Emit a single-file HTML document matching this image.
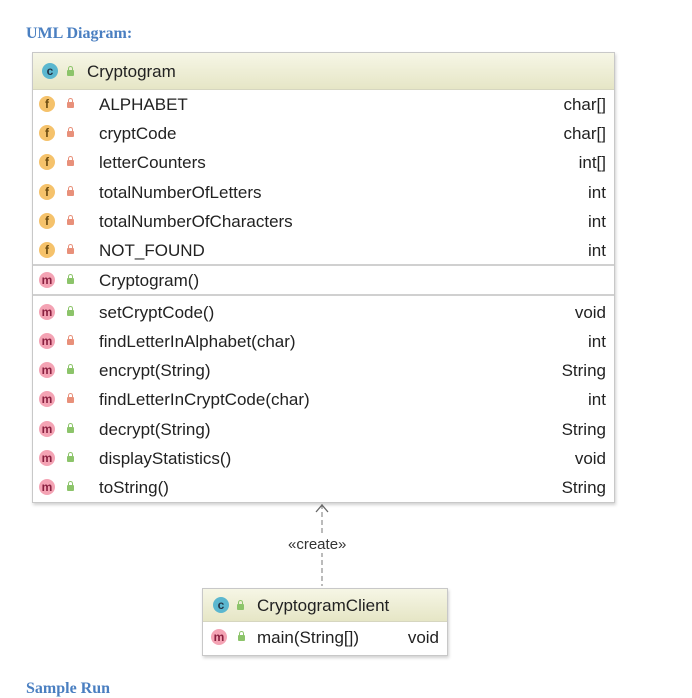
<!DOCTYPE html>
<html><head><style>
body{margin:0;width:692px;height:687px;background:#fff;position:relative;overflow:hidden;font-family:"Liberation Sans",sans-serif;color:#222}
.t{position:absolute;left:26px;top:25px;font-family:"Liberation Serif",serif;font-weight:bold;color:#4a7fc1;font-size:16px}
.box{position:absolute;border:1px solid #c8c8c8;box-shadow:1px 2px 3px rgba(0,0,0,.18);background:#fff}
.hd{background:linear-gradient(#f6f6e6,#e6e6c6);border-bottom:1px solid #d6d6c0;position:relative;font-size:17px}
.r{position:absolute;left:0;right:0;height:29px;font-size:17px;line-height:29px}
.r .n{position:absolute;left:66px}.r .ty{position:absolute;right:8px}
.ic{position:absolute;width:16px;height:16px;border-radius:50%;font-size:12px;line-height:16px;text-align:center;color:#6a4a10;font-weight:bold}
.f{background:#f5c26b}.m{background:#f4a3b4;color:#8a2040}.c{background:#5bb7cf;color:#234}
.lk{position:absolute;width:7px;height:6px;border-radius:1px;top:14px}
.lk:before{content:"";position:absolute;left:1px;top:-4px;width:3px;height:4px;border:1px solid currentColor;border-bottom:none;border-radius:3px 3px 0 0}
.pr{background:#e8907a;color:#e8907a}.pu{background:#8cc46a;color:#8cc46a}
.sep{position:absolute;left:0;right:0;height:2px;background:#d0d0d0}
</style></head><body>
<div class="t">UML Diagram:</div>
<div class="box" style="left:32px;top:52px;width:581px;height:449px">
 <div class="hd" style="height:36px"><div class="ic c" style="left:9px;top:10px">c</div><div class="lk pu" style="left:34px;top:17px"></div><span style="position:absolute;left:54px;top:9px">Cryptogram</span></div>
 <div style="position:relative">
 <div class="r" style="top:0"><div class="ic f" style="left:6px;top:6px">f</div><div class="lk pr" style="left:34px;top:12px"></div><span class="n">ALPHABET</span><span class="ty">char[]</span></div>
 <div class="r" style="top:29px"><div class="ic f" style="left:6px;top:6px">f</div><div class="lk pr" style="left:34px;top:12px"></div><span class="n">cryptCode</span><span class="ty">char[]</span></div>
 <div class="r" style="top:58px"><div class="ic f" style="left:6px;top:6px">f</div><div class="lk pr" style="left:34px;top:12px"></div><span class="n">letterCounters</span><span class="ty">int[]</span></div>
 <div class="r" style="top:88px"><div class="ic f" style="left:6px;top:6px">f</div><div class="lk pr" style="left:34px;top:12px"></div><span class="n">totalNumberOfLetters</span><span class="ty">int</span></div>
 <div class="r" style="top:117px"><div class="ic f" style="left:6px;top:6px">f</div><div class="lk pr" style="left:34px;top:12px"></div><span class="n">totalNumberOfCharacters</span><span class="ty">int</span></div>
 <div class="r" style="top:146px"><div class="ic f" style="left:6px;top:6px">f</div><div class="lk pr" style="left:34px;top:12px"></div><span class="n">NOT_FOUND</span><span class="ty">int</span></div>
 <div class="sep" style="top:174px"></div>
 <div class="r" style="top:176px"><div class="ic m" style="left:6px;top:6px">m</div><div class="lk pu" style="left:34px;top:12px"></div><span class="n">Cryptogram()</span></div>
 <div class="sep" style="top:204px"></div>
 <div class="r" style="top:208px"><div class="ic m" style="left:6px;top:6px">m</div><div class="lk pu" style="left:34px;top:12px"></div><span class="n">setCryptCode()</span><span class="ty">void</span></div>
 <div class="r" style="top:237px"><div class="ic m" style="left:6px;top:6px">m</div><div class="lk pr" style="left:34px;top:12px"></div><span class="n">findLetterInAlphabet(char)</span><span class="ty">int</span></div>
 <div class="r" style="top:266px"><div class="ic m" style="left:6px;top:6px">m</div><div class="lk pu" style="left:34px;top:12px"></div><span class="n">encrypt(String)</span><span class="ty">String</span></div>
 <div class="r" style="top:295px"><div class="ic m" style="left:6px;top:6px">m</div><div class="lk pr" style="left:34px;top:12px"></div><span class="n">findLetterInCryptCode(char)</span><span class="ty">int</span></div>
 <div class="r" style="top:325px"><div class="ic m" style="left:6px;top:6px">m</div><div class="lk pu" style="left:34px;top:12px"></div><span class="n">decrypt(String)</span><span class="ty">String</span></div>
 <div class="r" style="top:354px"><div class="ic m" style="left:6px;top:6px">m</div><div class="lk pu" style="left:34px;top:12px"></div><span class="n">displayStatistics()</span><span class="ty">void</span></div>
 <div class="r" style="top:383px"><div class="ic m" style="left:6px;top:6px">m</div><div class="lk pu" style="left:34px;top:12px"></div><span class="n">toString()</span><span class="ty">String</span></div>
 </div>
</div>
<svg style="position:absolute;left:312px;top:502px" width="22" height="86"><path d="M10 2V84" stroke="#777" stroke-dasharray="5,3" fill="none"/><path d="M4 10L10 3L16 10" stroke="#666" fill="none" stroke-width="1.3"/></svg>
<div style="position:absolute;left:288px;top:536px;font-size:15px;background:#fff;color:#333">«create»</div>
<div class="box" style="left:202px;top:588px;width:244px;height:66px">
 <div class="hd" style="height:32px"><div class="ic c" style="left:10px;top:8px">c</div><div class="lk pu" style="left:34px;top:15px"></div><span style="position:absolute;left:54px;top:7px">CryptogramClient</span></div>
 <div class="r" style="top:34px"><div class="ic m" style="left:8px;top:6px">m</div><div class="lk pu" style="left:35px;top:12px"></div><span class="n" style="left:54px">main(String[])</span><span class="ty">void</span></div>
</div>
<div style="position:absolute;left:26px;top:680px;font-family:'Liberation Serif',serif;font-weight:bold;color:#4a7fc1;font-size:16px">Sample Run</div>
</body></html>
